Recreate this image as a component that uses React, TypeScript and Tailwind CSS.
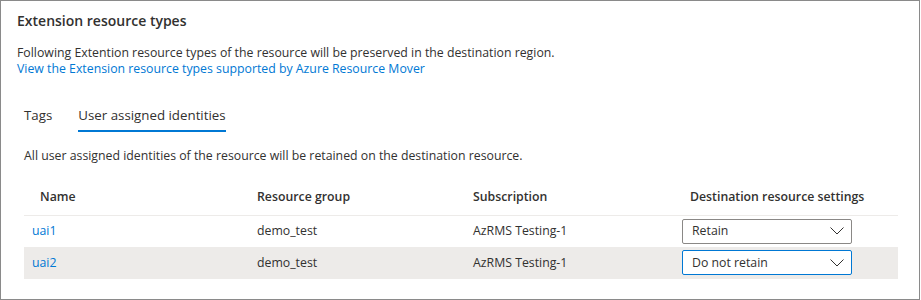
type Row = {
  name: string;
  group: string;
  subscription: string;
  setting: string;
  focused?: boolean;
};

const rows: Row[] = [
  { name: "uai1", group: "demo_test", subscription: "AzRMS Testing-1", setting: "Retain" },
  {
    name: "uai2",
    group: "demo_test",
    subscription: "AzRMS Testing-1",
    setting: "Do not retain",
    focused: true,
  },
];

function Chevron() {
  return (
    <svg width="14" height="8" viewBox="0 0 14 8" fill="none">
      <path d="M0.5 0.5 L7 7 L13.5 0.5" stroke="#323130" strokeWidth="1" />
    </svg>
  );
}

function Dropdown({ value, focused }: { value: string; focused?: boolean }) {
  return (
    <div
      className={
        focused
          ? "flex items-center justify-between w-[170px] h-[25px] pl-[9px] pr-[7px] bg-white border border-[#0078d4] rounded-[2px]"
          : "flex items-center justify-between w-[170px] h-[25px] pl-[9px] pr-[7px] bg-white border border-[#8a8886] rounded-[2px]"
      }
    >
      <span className="text-[12.3px] text-[#323130]">{value}</span>
      <Chevron />
    </div>
  );
}

export default function App() {
  return (
    <div
      className="w-[920px] h-[300px] border border-[#8a8a8a] bg-white text-[#323130] px-4 pt-[10px]"
      style={{ fontFamily: '"Open Sans", "Noto Sans", sans-serif' }}
    >
      <h2 className="text-[14px] font-semibold leading-5">Extension resource types</h2>

      <p className="mt-[14px] text-[12.3px] leading-4">
        Following Extention resource types of the resource will be preserved in the destination region.
      </p>
      <a className="block text-[12.3px] leading-4 text-[#0078d4]">
        View the Extension resource types supported by Azure Resource Mover
      </a>

      <div className="flex gap-[26px] mt-[25px] px-[7px] text-[13.3px]">
        <div className="pb-[6px] pt-[4px]">Tags</div>
        <div className="pb-[4px] pt-[4px] border-b-2 border-[#0078d4]">User assigned identities</div>
      </div>

      <div className="px-[7px]">
        <p className="mt-[16px] text-[12.3px] leading-4">
          All user assigned identities of the resource will be retained on the destination resource.
        </p>

        <div className="mt-[16px] w-[874px] text-[12.3px]">
          <div className="grid grid-cols-[225px_216px_217px_1fr] h-[36px] items-center font-semibold border-b border-[#edebe9]">
            <div className="pl-4">Name</div>
            <div className="pl-2">Resource group</div>
            <div className="pl-2">Subscription</div>
            <div className="pl-2">Destination resource settings</div>
          </div>
          {rows.map((r) => (
            <div
              key={r.name}
              className={
                r.focused
                  ? "grid grid-cols-[225px_216px_217px_1fr] h-8 items-center bg-[#edebe9]"
                  : "grid grid-cols-[225px_216px_217px_1fr] h-[31px] items-center"
              }
            >
              <div className="pl-2 text-[#0078d4]">{r.name}</div>
              <div className="pl-2">{r.group}</div>
              <div className="pl-2">{r.subscription}</div>
              <div>
                <Dropdown value={r.setting} focused={r.focused} />
              </div>
            </div>
          ))}
        </div>
      </div>
    </div>
  );
}
